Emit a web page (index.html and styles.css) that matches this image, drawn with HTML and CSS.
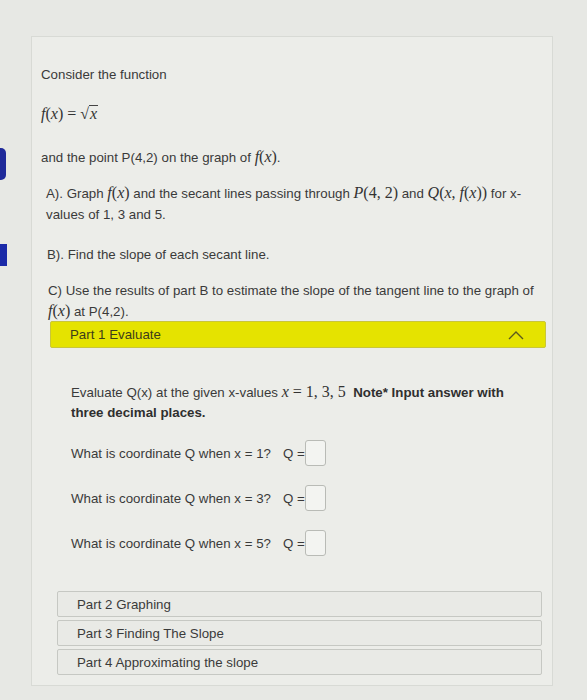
FILE: index.html
```html
<!DOCTYPE html>
<html>
<head>
<meta charset="utf-8">
<link rel="stylesheet" href="styles.css">
</head>
<body>
<div class="side-tab side-tab-top"></div>
<div class="side-tab side-tab-bottom"></div>
<div class="page">
  <div class="card">
    <p class="line first">Consider the function</p>
    <p class="math-line"><span class="m"><i>f</i>(<i>x</i>) = <span class="sqrt">√<span class="rad"><i>x</i></span></span></span></p>
    <p class="line point">and the point P(4,2) on the graph of <span class="m"><i>f</i>(<i>x</i>)</span>.</p>
    <p class="line para-a">A). Graph <span class="m"><i>f</i>(<i>x</i>)</span> and the secant lines passing through <span class="m"><i>P</i>(4, 2)</span> and <span class="m"><i>Q</i>(<i>x</i>, <i>f</i>(<i>x</i>))</span> for x-values of 1, 3 and 5.</p>
    <p class="line para-b">B). Find the slope of each secant line.</p>
    <p class="line para-c">C) Use the results of part B to estimate the slope of the tangent line to the graph of <span class="m"><i>f</i>(<i>x</i>)</span> at P(4,2).</p>

    <div class="part-open">
      <span>Part 1 Evaluate</span>
      <svg class="chev" width="18" height="10" viewBox="0 0 18 10"><path d="M2 9 L9 2 L16 9" fill="none" stroke="#5b5a1e" stroke-width="1.4"/></svg>
    </div>

    <div class="part-body">
      <p class="eval">Evaluate Q(x) at the given x-values <span class="m"><i>x</i> = 1, 3, 5</span> &nbsp;<b>Note* Input answer with three decimal places.</b></p>
      <div class="qrow"><span class="qtext">What is coordinate Q when x = 1?</span><span class="qeq">Q =</span><span class="qbox"></span></div>
      <div class="qrow"><span class="qtext">What is coordinate Q when x = 3?</span><span class="qeq">Q =</span><span class="qbox"></span></div>
      <div class="qrow"><span class="qtext">What is coordinate Q when x = 5?</span><span class="qeq">Q =</span><span class="qbox"></span></div>
    </div>

    <div class="parts">
      <div class="part">Part 2 Graphing</div>
      <div class="part">Part 3 Finding The Slope</div>
      <div class="part">Part 4 Approximating the slope</div>
    </div>
  </div>
</div>
</body>
</html>
```

FILE: styles.css
```css
html, body {
  margin: 0;
  padding: 0;
}
body {
  background: #e7e8e4;
  font-family: "Liberation Sans", Arial, sans-serif;
  font-size: 13.3px;
  color: #3a3a3a;
  width: 587px;
  height: 700px;
  overflow: hidden;
  position: relative;
}
.side-tab {
  position: absolute;
  left: 0;
  background: #1f2a9a;
}
.side-tab-top {
  top: 148px;
  width: 6px;
  height: 32px;
  border-radius: 0 5px 5px 0;
}
.side-tab-bottom {
  top: 244px;
  width: 7px;
  height: 22px;
  background: #1b2aa8;
}
.page {
  padding: 36px 0 0 31px;
}
.card {
  width: 522px;
  height: 650px;
  border: 1px solid #d8dad5;
  background: #ecede9;
  box-sizing: border-box;
  padding: 27px 8px 0 9px;
}
p {
  margin: 0;
}
.line {
  line-height: 21px;
}
.m {
  font-family: "Liberation Serif", "DejaVu Serif", serif;
  font-size: 16px;
  line-height: 1;
  color: #333;
}
.m i {
  font-style: italic;
}
.math-line {
  margin-top: 18px;
  line-height: 24px;
}
.sqrt {
  display: inline-block;
}
.rad {
  border-top: 1px solid #444;
  padding: 0 1px;
  line-height: 15px;
  display: inline-block;
}
.point {
  margin-top: 20px;
}
.para-a {
  margin-top: 15px;
  padding-left: 5px;
  padding-right: 5px;
}
.para-b {
  margin-top: 19px;
  padding-left: 6px;
}
.para-c {
  margin-top: 15px;
  padding-left: 7px;
  padding-right: 0;
}
.part-open {
  margin: -1px 0 0 9px;
  width: 496px;
  height: 27px;
  box-sizing: border-box;
  background: #e5e300;
  border: 1px solid #c9c63a;
  border-radius: 2px;
  display: flex;
  align-items: center;
  justify-content: space-between;
  padding: 0 20px 0 19px;
  color: #3d3c1a;
}
.chev {
  display: block;
}
.part-body {
  padding: 35px 0 0 30px;
}
.eval {
  line-height: 20px;
  padding-right: 20px;
}
.eval b {
  color: #2f2f2f;
}
.qrow {
  display: flex;
  align-items: center;
  height: 26px;
}
.qrow:first-of-type {
  margin-top: 17px;
}
.qrow + .qrow {
  margin-top: 19px;
}
.qtext {
  width: 212px;
}
.qeq {
  width: 22px;
}
.qbox {
  width: 19px;
  height: 24px;
  border: 1px solid #b9bbb6;
  border-radius: 3px;
  background: #f3f4f1;
}
.parts {
  margin: 35px 0 0 16px;
  width: 485px;
  display: flex;
  flex-direction: column;
  gap: 3px;
}
.part {
  height: 26px;
  box-sizing: border-box;
  border: 1px solid #c6c8c3;
  border-radius: 2px;
  background: #e9eae6;
  padding: 0 0 0 19px;
  display: flex;
  align-items: center;
}
```
